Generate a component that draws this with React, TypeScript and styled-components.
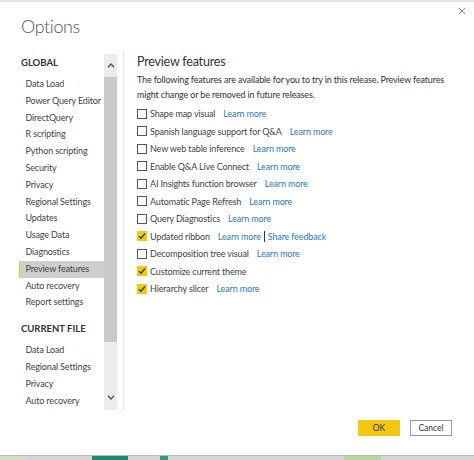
import React from 'react';
import styled, { createGlobalStyle } from 'styled-components';

const GlobalStyle = createGlobalStyle`
  html, body {
    margin: 0;
    padding: 0;
    background: #ffffff;
  }
  body {
    font-family: Lato, "Open Sans", sans-serif;
    color: #333;
  }
`;

const Window = styled.div`
  width: 474px;
  height: 460px;
  display: flex;
  flex-direction: column;
  background: #fff;
  border-top: 2px solid #e3e3e3;
  box-sizing: border-box;
  position: relative;
  overflow: hidden;
`;

const CloseMark = styled.svg`
  position: absolute;
  top: 6px;
  right: 8px;
`;

const Title = styled.h1`
  margin: 0;
  padding: 10px 0 0 21px;
  height: 38px;
  box-sizing: border-box;
  font-size: 18px;
  font-weight: 300;
  letter-spacing: -0.4px;
  color: #555;
  line-height: 28px;
`;

const Body = styled.div`
  display: flex;
  height: 362px;
  padding-top: 12px;
  box-sizing: border-box;
`;

const Sidebar = styled.div`
  display: flex;
  width: 123px;
  padding-top: 2px;
  box-sizing: border-box;
`;

const NavList = styled.div`
  width: 104px;
  padding-left: 20px;
  box-sizing: border-box;
  display: flex;
  flex-direction: column;
`;

const SectionLabel = styled.div<{ $top: number }>`
  font-size: 9.5px;
  font-weight: 700;
  color: #333;
  height: 17px;
  line-height: 17px;
  margin-top: ${p => p.$top}px;
  margin-bottom: 5px;
  padding-left: 1px;
`;

const NavItem = styled.div<{ $active?: boolean }>`
  font-size: 9px;
  letter-spacing: -0.15px;
  color: #444;
  height: 16.8px;
  line-height: 16.8px;
  padding-left: 6px;
  white-space: nowrap;
  background: ${p => (p.$active ? '#cfcfcf' : 'transparent')};
  border-left: 1.5px solid ${p => (p.$active ? '#f2c811' : 'transparent')};
  margin-left: -1.5px;
`;

const Scrollbar = styled.div`
  width: 13px;
  height: 356px;
  display: flex;
  flex-direction: column;
  background: #ececec;
`;

const ScrollButton = styled.div`
  height: 23px;
  display: flex;
  align-items: center;
  justify-content: center;
  color: #555;
`;

const ScrollThumb = styled.div`
  height: 265px;
  background: #c9c9c9;
`;

const ScrollTrack = styled.div`
  flex: 1;
  display: flex;
  align-items: flex-end;
  justify-content: center;
  padding-bottom: 10px;
`;

const Divider = styled.div`
  width: 1px;
  height: 360px;
  margin-top: -2px;
  background: #e6e6e6;
`;

const Content = styled.div`
  flex: 1;
  padding-left: 13px;
  display: flex;
  flex-direction: column;
`;

const Heading = styled.h2`
  margin: 0;
  font-size: 12.5px;
  letter-spacing: -0.2px;
  font-weight: 400;
  color: #333;
  line-height: 20px;
`;

const Description = styled.p`
  margin: 0 0 3px;
  font-size: 9px;
  letter-spacing: -0.15px;
  line-height: 15px;
  color: #333;
  width: 312px;
`;

const FeatureRow = styled.div`
  display: flex;
  align-items: center;
  height: 17.5px;
  font-size: 9px;
  letter-spacing: -0.15px;
  color: #444;
  white-space: nowrap;
`;

const Box = styled.span<{ $checked?: boolean }>`
  width: 10px;
  height: 10px;
  box-sizing: border-box;
  border: 1px solid ${p => (p.$checked ? '#f2c811' : '#555')};
  background: ${p => (p.$checked ? '#f2c811' : '#fff')};
  display: inline-flex;
  align-items: center;
  justify-content: center;
  margin-right: 3px;
`;

const Label = styled.span`
  margin-right: 8px;
`;

const Link = styled.a`
  color: #2b79c8;
  text-decoration: none;
`;

const Separator = styled.span`
  display: inline-block;
  width: 1px;
  height: 11px;
  background: #333;
  margin: 0 3px;
`;

const Footer = styled.div`
  display: flex;
  justify-content: flex-end;
  gap: 10px;
  padding: 18px 22px 0 0;
  height: 58px;
  box-sizing: border-box;
`;

const Button = styled.button<{ $primary?: boolean }>`
  width: 42px;
  height: 16px;
  font-family: Lato, "Open Sans", sans-serif;
  font-size: 8.5px;
  padding: 0;
  color: #333;
  background: ${p => (p.$primary ? '#f2c811' : '#fff')};
  border: 1px solid ${p => (p.$primary ? '#f2c811' : '#999')};
`;

const AppStrip = styled.div`
  height: 4px;
  display: flex;
  background: #d6d6d6;
  border-top: 1px solid #bdbdbd;
`;

const StripPatch = styled.div<{ $w: number; $c: string }>`
  width: ${p => p.$w}px;
  background: ${p => p.$c};
`;

const globalItems = [
  'Data Load',
  'Power Query Editor',
  'DirectQuery',
  'R scripting',
  'Python scripting',
  'Security',
  'Privacy',
  'Regional Settings',
  'Updates',
  'Usage Data',
  'Diagnostics',
  'Preview features',
  'Auto recovery',
  'Report settings',
];

const fileItems = ['Data Load', 'Regional Settings', 'Privacy', 'Auto recovery'];

type Feature = { label: string; checked?: boolean; learn?: boolean; feedback?: boolean };

const features: Feature[] = [
  { label: 'Shape map visual', learn: true },
  { label: 'Spanish language support for Q&A', learn: true },
  { label: 'New web table inference', learn: true },
  { label: 'Enable Q&A Live Connect', learn: true },
  { label: 'AI Insights function browser', learn: true },
  { label: 'Automatic Page Refresh', learn: true },
  { label: 'Query Diagnostics', learn: true },
  { label: 'Updated ribbon', checked: true, learn: true, feedback: true },
  { label: 'Decomposition tree visual', learn: true },
  { label: 'Customize current theme', checked: true },
  { label: 'Hierarchy slicer', checked: true, learn: true },
];

const Chevron = ({ up }: { up?: boolean }) => (
  <svg width="8" height="5" viewBox="0 0 8 5">
    <path
      d={up ? 'M1 4.2 L4 1 L7 4.2' : 'M1 0.8 L4 4 L7 0.8'}
      fill="none"
      stroke="#555"
      strokeWidth="1.4"
    />
  </svg>
);

const Check = () => (
  <svg width="8" height="8" viewBox="0 0 8 8">
    <path d="M1 4.2 L3 6.2 L7 1.5" fill="none" stroke="#333" strokeWidth="1.3" />
  </svg>
);

export default function App() {
  return (
    <>
      <GlobalStyle />
      <Window>
        <CloseMark width="8" height="6" viewBox="0 0 8 6">
          <path d="M1 0 L7 6 M7 0 L1 6" stroke="#888" strokeWidth="1" />
        </CloseMark>
        <Title>Options</Title>
        <Body>
          <Sidebar>
            <NavList>
              <SectionLabel $top={0}>GLOBAL</SectionLabel>
              {globalItems.map(item => (
                <NavItem key={item} $active={item === 'Preview features'}>
                  {item}
                </NavItem>
              ))}
              <SectionLabel $top={9}>CURRENT FILE</SectionLabel>
              {fileItems.map(item => (
                <NavItem key={item}>{item}</NavItem>
              ))}
            </NavList>
            <Scrollbar>
              <ScrollButton>
                <Chevron up />
              </ScrollButton>
              <ScrollThumb />
              <ScrollTrack>
                <Chevron />
              </ScrollTrack>
            </Scrollbar>
          </Sidebar>
          <Divider />
          <Content>
            <Heading>Preview features</Heading>
            <Description>
              The following features are available for you to try in this release. Preview features
              might change or be removed in future releases.
            </Description>
            {features.map(f => (
              <FeatureRow key={f.label}>
                <Box $checked={f.checked}>{f.checked && <Check />}</Box>
                <Label>{f.label}</Label>
                {f.learn && <Link>Learn more</Link>}
                {f.feedback && (
                  <>
                    <Separator />
                    <Link>Share feedback</Link>
                  </>
                )}
              </FeatureRow>
            ))}
          </Content>
        </Body>
        <Footer>
          <Button $primary>OK</Button>
          <Button>Cancel</Button>
        </Footer>
        <AppStrip>
          <StripPatch $w={25} $c="#cfe0c3" />
          <StripPatch $w={67} $c="#d6d6d6" />
          <StripPatch $w={36} $c="#1e8a70" />
          <StripPatch $w={32} $c="#d6d6d6" />
          <StripPatch $w={8} $c="#2a9a80" />
          <StripPatch $w={176} $c="#d6d6d6" />
          <StripPatch $w={37} $c="#b8d89c" />
        </AppStrip>
      </Window>
    </>
  );
}
